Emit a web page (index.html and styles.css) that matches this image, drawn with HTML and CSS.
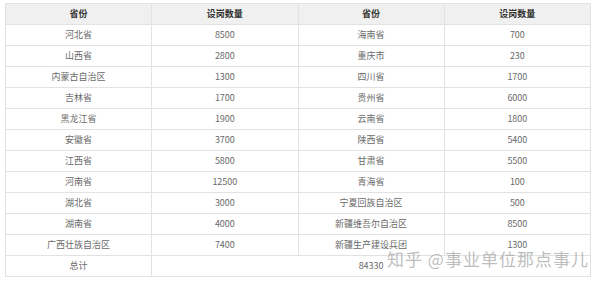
FILE: index.html
```html
<!DOCTYPE html>
<html lang="zh">
<head>
    <meta charset="UTF-8" />
    <title>设岗数量</title>
    <link rel="stylesheet" href="styles.css">
</head>
<body>
    <div class="wrap">
        <table class="quota">
            <thead>
                <tr>
                    <th>省份</th>
                    <th>设岗数量</th>
                    <th>省份</th>
                    <th>设岗数量</th>
                </tr>
            </thead>
            <tbody>
                <tr><td>河北省</td><td>8500</td><td>海南省</td><td>700</td></tr>
                <tr><td>山西省</td><td>2800</td><td>重庆市</td><td>230</td></tr>
                <tr><td>内蒙古自治区</td><td>1300</td><td>四川省</td><td>1700</td></tr>
                <tr><td>吉林省</td><td>1700</td><td>贵州省</td><td>6000</td></tr>
                <tr><td>黑龙江省</td><td>1900</td><td>云南省</td><td>1800</td></tr>
                <tr><td>安徽省</td><td>3700</td><td>陕西省</td><td>5400</td></tr>
                <tr><td>江西省</td><td>5800</td><td>甘肃省</td><td>5500</td></tr>
                <tr><td>河南省</td><td>12500</td><td>青海省</td><td>100</td></tr>
                <tr><td>湖北省</td><td>3000</td><td>宁夏回族自治区</td><td>500</td></tr>
                <tr><td>湖南省</td><td>4000</td><td>新疆维吾尔自治区</td><td>8500</td></tr>
                <tr><td>广西壮族自治区</td><td>7400</td><td>新疆生产建设兵团</td><td>1300</td></tr>
                <tr><td>总计</td><td colspan="3">84330</td></tr>
            </tbody>
        </table>
        <!-- 水印 -->
        <div class="watermark">知乎 @事业单位那点事儿</div>
    </div>
</body>
</html>
```

FILE: styles.css
```css
body {
    margin: 0;
    background: #fff;
    font-family: "Noto Sans CJK SC", "Noto Sans", sans-serif;
}
.wrap {
    position: relative;
    width: 600px;
    height: 284px;
    padding: 3px 0 0 5px;
    box-sizing: border-box;
}
.quota {
    border-collapse: collapse;
    width: 586px;
    table-layout: fixed;
}
.quota th,
.quota td {
    height: 20px;
    padding: 0;
    border: 1px solid #e2e2e2;
    text-align: center;
    vertical-align: middle;
    font-size: 9px;
    line-height: 20px;
    color: #6a6a6a;
}
.quota th {
    background-color: #f0f0f0;
    color: #333;
    font-weight: bold;
}
.watermark {
    position: absolute;
    left: 387px;
    top: 246px;
    font-size: 17px;
    color: rgba(160, 160, 160, 0.7);
    letter-spacing: 1px;
    white-space: nowrap;
}
```
